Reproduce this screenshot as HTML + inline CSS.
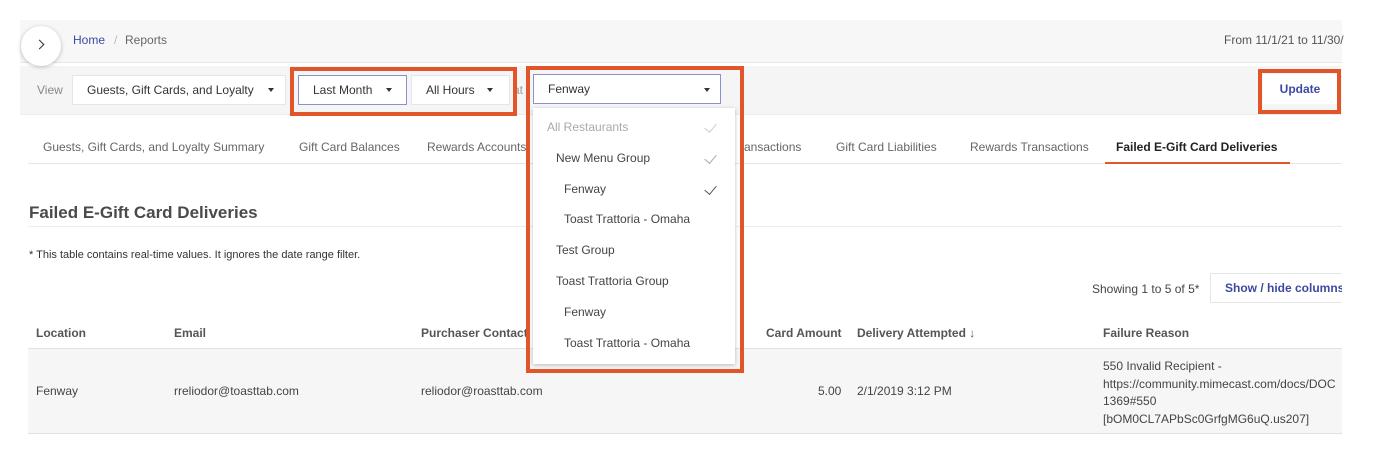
<!DOCTYPE html>
<html><head><meta charset="utf-8"><style>
body{margin:0;width:1376px;height:460px;background:#fff;font-family:"Liberation Sans",sans-serif;font-size:12px;color:#444;position:relative;overflow:hidden}
.a{position:absolute;white-space:nowrap}
.box{position:absolute;border:4px solid #e2552a;box-sizing:border-box}
.sel{position:absolute;background:#fff;border:1px solid #e6e6e6;box-sizing:border-box;height:30px;line-height:28px;padding-left:14px;color:#333}
.caret{position:absolute;width:0;height:0;border-left:3.5px solid transparent;border-right:3.5px solid transparent;border-top:4px solid #333}
.th{position:absolute;font-weight:bold;color:#555;top:326px}
.dd{position:absolute;color:#444}
.ck{position:absolute;width:10px;height:6px;border-left:1.3px solid #999;border-bottom:1.3px solid #999;transform:rotate(-50deg)}
</style></head><body>
<div class="a" style="left:20px;top:20px;width:1322px;height:42px;background:#f7f7f7;border-bottom:1px solid #e8e8e8"></div>
<div class="a" style="left:20px;top:66px;width:1322px;height:48px;background:#f5f5f5;border-bottom:1px solid #ececec"></div>
<div class="a" style="left:21px;top:26px;width:40px;height:40px;border-radius:50%;background:#fff;box-shadow:0 1px 4px rgba(0,0,0,.25)"></div>
<div class="a" style="left:36px;top:41px;width:6px;height:6px;border-top:1.8px solid #333;border-right:1.8px solid #333;transform:rotate(45deg)"></div>
<div class="a" style="left:73px;top:33px;color:#3d4aa0">Home</div>
<div class="a" style="left:114px;top:33px;color:#bbb">/</div>
<div class="a" style="left:125px;top:33px;color:#666">Reports</div>
<div class="a" style="left:1224px;top:33px;color:#555">From 11/1/21 to 11/30/</div>
<div class="a" style="left:37px;top:83px;color:#888">View</div>
<div class="sel" style="left:72px;top:75px;width:214px">Guests, Gift Cards, and Loyalty</div><div class="caret" style="left:268px;top:88px"></div>
<div class="sel" style="left:298px;top:75px;width:109px;border-color:#8a93c9">Last Month</div><div class="caret" style="left:386px;top:88px"></div>
<div class="sel" style="left:411px;top:75px;width:99px">All Hours</div><div class="caret" style="left:487px;top:88px"></div>
<div class="a" style="left:513px;top:83px;color:#999">at</div>
<div class="sel" style="left:533px;top:74px;width:188px;border-color:#8a93c9">Fenway</div><div class="caret" style="left:704px;top:88px"></div>
<div class="a" style="left:1263px;top:74px;width:74px;height:30px;background:#fff;color:#3d4aa0;font-weight:bold;text-align:center;line-height:30px">Update</div>
<div class="a" style="left:43px;top:140px;color:#666">Guests, Gift Cards, and Loyalty Summary</div>
<div class="a" style="left:299px;top:140px;color:#666">Gift Card Balances</div>
<div class="a" style="left:427px;top:140px;color:#666">Rewards Accounts</div>
<div class="a" style="left:740px;top:140px;color:#666">ransactions</div>
<div class="a" style="left:836px;top:140px;color:#666">Gift Card Liabilities</div>
<div class="a" style="left:970px;top:140px;color:#666">Rewards Transactions</div>
<div class="a" style="left:1116px;top:140px;color:#222;font-weight:bold">Failed E-Gift Card Deliveries</div>
<div class="a" style="left:28px;top:163px;width:1314px;height:1px;background:#e6e6e6"></div>
<div class="a" style="left:1105px;top:162px;width:185px;height:2px;background:#e2552a"></div>
<div class="a" style="left:29px;top:203px;font-size:17px;font-weight:bold;color:#4a4a4a">Failed E-Gift Card Deliveries</div>
<div class="a" style="left:28px;top:226px;width:1314px;height:1px;background:#ececec"></div>
<div class="a" style="left:29px;top:249px;font-size:11px;color:#333">* This table contains real-time values. It ignores the date range filter.</div>
<div class="a" style="left:1092px;top:282px;color:#444">Showing 1 to 5 of 5*</div>
<div class="a" style="left:1210px;top:273px;width:132px;height:30px;border:1px solid #e6e6e6;border-right:none;box-sizing:border-box;color:#3d4aa0;font-weight:bold;line-height:28px;padding-left:14px;overflow:hidden">Show / hide columns</div>
<div class="th" style="left:36px">Location</div>
<div class="th" style="left:174px">Email</div>
<div class="th" style="left:421px">Purchaser Contact</div>
<div class="th" style="left:766px">Card Amount</div>
<div class="th" style="left:857px">Delivery Attempted ↓</div>
<div class="th" style="left:1103px">Failure Reason</div>
<div class="a" style="left:28px;top:348px;width:1314px;height:84px;background:#f6f6f6;border-top:1px solid #e2e2e2;border-bottom:1px solid #e2e2e2"></div>
<div class="a" style="left:36px;top:384px">Fenway</div>
<div class="a" style="left:174px;top:384px">rreliodor@toasttab.com</div>
<div class="a" style="left:421px;top:384px">reliodor@roasttab.com</div>
<div class="a" style="left:818px;top:384px">5.00</div>
<div class="a" style="left:857px;top:384px">2/1/2019 3:12 PM</div>
<div class="a" style="left:1103px;top:358px;line-height:17.5px;white-space:normal;width:239px;overflow:hidden">550 Invalid Recipient -<br><span style="white-space:nowrap">https://community.mimecast.com/docs/DOC</span><br>1369#550<br>[bOM0CL7APbSc0GrfgMG6uQ.us207]</div>
<div class="a" style="left:533px;top:108px;width:202px;height:256px;background:#fff;box-shadow:0 1px 4px rgba(0,0,0,.25)"></div>
<div class="dd" style="left:547px;top:120px;color:#aaa">All Restaurants</div><div class="ck" style="left:705px;top:123px;border-color:#ccc"></div>
<div class="dd" style="left:556px;top:151px">New Menu Group</div><div class="ck" style="left:705px;top:154px;border-color:#aaa"></div>
<div class="dd" style="left:564px;top:182px">Fenway</div><div class="ck" style="left:705px;top:185px;border-color:#555"></div>
<div class="dd" style="left:564px;top:212px">Toast Trattoria - Omaha</div>
<div class="dd" style="left:556px;top:243px">Test Group</div>
<div class="dd" style="left:556px;top:274px">Toast Trattoria Group</div>
<div class="dd" style="left:564px;top:305px">Fenway</div>
<div class="dd" style="left:564px;top:336px">Toast Trattoria - Omaha</div>
<div class="box" style="left:290px;top:67px;width:227px;height:49px"></div>
<div class="box" style="left:526px;top:66px;width:218px;height:307px"></div>
<div class="box" style="left:1258px;top:69px;width:83px;height:45px"></div>
</body></html>
